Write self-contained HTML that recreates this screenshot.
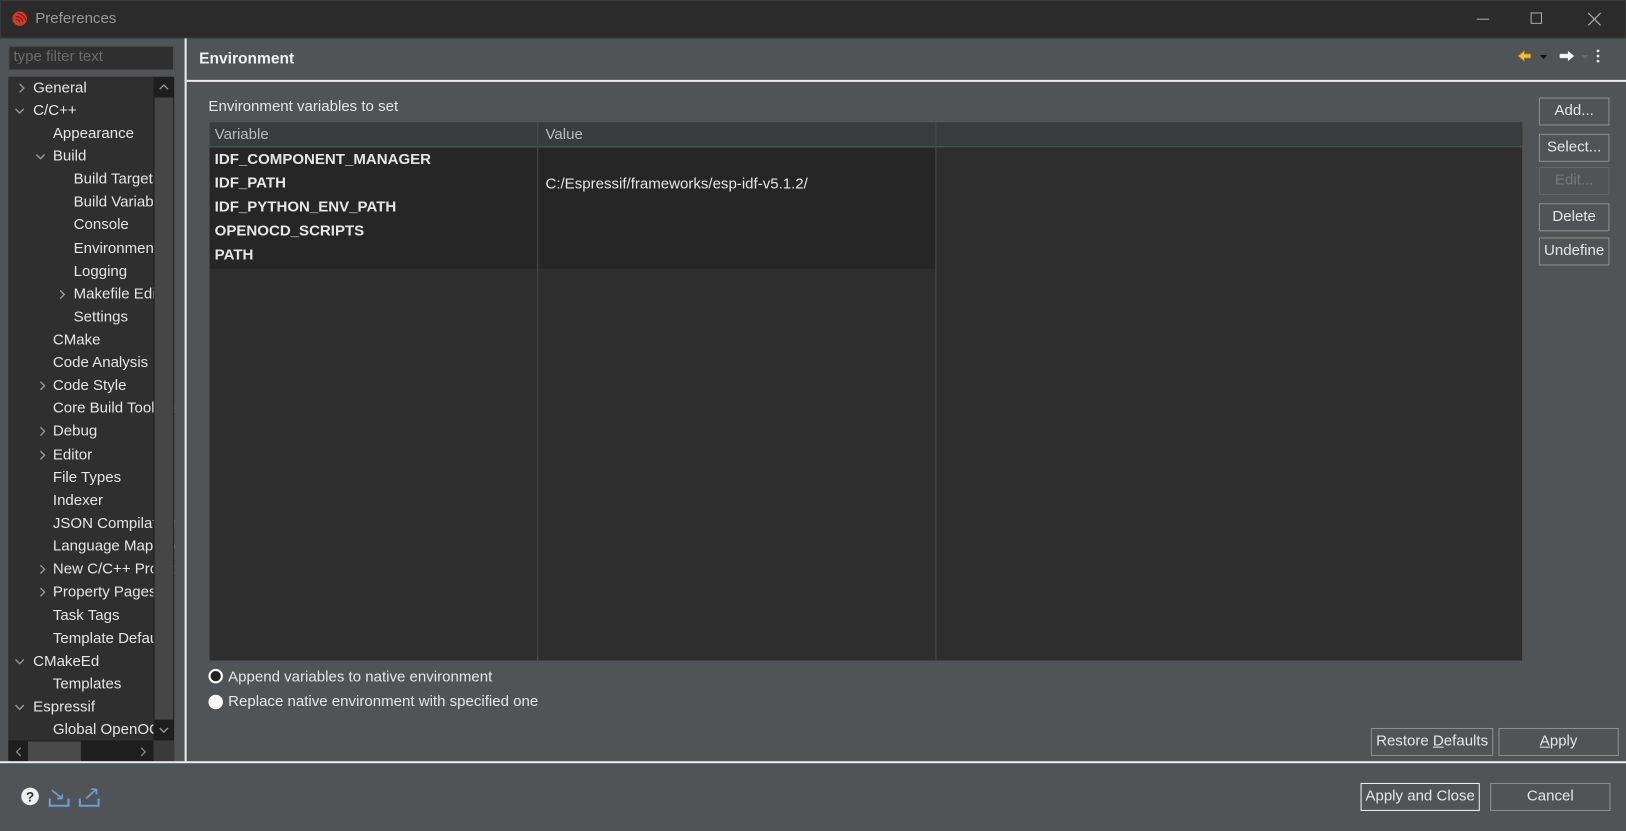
<!DOCTYPE html>
<html><head><meta charset="utf-8"><style>
*{margin:0;padding:0;box-sizing:border-box}
html,body{width:1626px;height:831px;overflow:hidden;background:#505457}
#w{width:1568px;height:802px;transform:scale(1.037);transform-origin:0 0;position:relative;font-family:"Liberation Sans",sans-serif;font-size:14.5px;color:#e6e6e6}
.abs{position:absolute}
.title{left:0;top:0;width:1568px;height:37px;background:#2b2b2b;border:1px solid #3a3a3a}
.tree{left:8px;top:74px;width:160px;height:661px;background:#2f2f2f;overflow:hidden}
.ti{position:absolute;white-space:nowrap;height:22px;line-height:22px}
.chev{position:absolute}
.btn{position:absolute;border:1px solid #8e8e8e;text-align:center;color:#e6e6e6;height:27px;line-height:25px}
.row{position:absolute;left:207px;font-weight:bold;height:23px;line-height:23px}
</style></head><body><div id="w">
<div class="abs title"></div>
<svg class="abs" style="left:11px;top:10px" width="16" height="16"><circle cx="8" cy="8" r="7" fill="#d23a2c"/><path d="M4 6a6 6 0 0 1 7 5M4 9a3 3 0 0 1 4 3M6 3a9 9 0 0 1 8 7" stroke="#8a1c14" stroke-width="1.2" fill="none"/></svg>
<div class="abs" style="left:34px;top:10px;color:#9a9a9a">Preferences</div>
<div class="abs" style="left:1424px;top:18px;width:12px;height:1px;background:#aaa"></div>
<div class="abs" style="left:1476px;top:12px;width:11px;height:11px;border:1px solid #aaa"></div>
<svg class="abs" style="left:1531px;top:12px" width="13" height="13"><path d="M0.5 0.5L12.5 12.5M12.5 0.5L0.5 12.5" stroke="#aaa" stroke-width="1.2"/></svg>

<div class="abs" style="left:8px;top:44px;width:160px;height:24px;background:#2f2f2f;border:1px solid #555"></div>
<div class="abs" style="left:13px;top:47px;color:#6b6b6b">type filter text</div>

<div class="abs tree">
<svg width="0" height="0" style="position:absolute"><defs>
<path id="cr" d="M2 1L6 5L2 9" stroke="#9a9a9a" stroke-width="1.3" fill="none"/>
<path id="cd" d="M1 2L5 6L9 2" stroke="#9a9a9a" stroke-width="1.3" fill="none"/></defs></svg>
<svg class="chev" style="left:9px;top:6px" width="10" height="10"><use href="#cr"/></svg><div class="ti" style="left:24px;top:0">General</div>
<svg class="chev" style="left:6px;top:29px" width="10" height="10"><use href="#cd"/></svg><div class="ti" style="left:24px;top:22px">C/C++</div>
<div class="ti" style="left:43px;top:44px">Appearance</div>
<svg class="chev" style="left:26px;top:73px" width="10" height="10"><use href="#cd"/></svg><div class="ti" style="left:43px;top:66px">Build</div>
<div class="ti" style="left:63px;top:88px">Build Targets</div>
<div class="ti" style="left:63px;top:110px">Build Variables</div>
<div class="ti" style="left:63px;top:132px">Console</div>
<div class="ti" style="left:63px;top:155px">Environment</div>
<div class="ti" style="left:63px;top:177px">Logging</div>
<svg class="chev" style="left:48px;top:205px" width="10" height="10"><use href="#cr"/></svg><div class="ti" style="left:63px;top:199px">Makefile Editor</div>
<div class="ti" style="left:63px;top:221px">Settings</div>
<div class="ti" style="left:43px;top:243px">CMake</div>
<div class="ti" style="left:43px;top:265px">Code Analysis</div>
<svg class="chev" style="left:29px;top:293px" width="10" height="10"><use href="#cr"/></svg><div class="ti" style="left:43px;top:287px">Code Style</div>
<div class="ti" style="left:43px;top:309px">Core Build Toolchains</div>
<svg class="chev" style="left:29px;top:337px" width="10" height="10"><use href="#cr"/></svg><div class="ti" style="left:43px;top:331px">Debug</div>
<svg class="chev" style="left:29px;top:360px" width="10" height="10"><use href="#cr"/></svg><div class="ti" style="left:43px;top:354px">Editor</div>
<div class="ti" style="left:43px;top:376px">File Types</div>
<div class="ti" style="left:43px;top:398px">Indexer</div>
<div class="ti" style="left:43px;top:420px">JSON Compilation</div>
<div class="ti" style="left:43px;top:442px">Language Mappings</div>
<svg class="chev" style="left:29px;top:470px" width="10" height="10"><use href="#cr"/></svg><div class="ti" style="left:43px;top:464px">New C/C++ Project</div>
<svg class="chev" style="left:29px;top:492px" width="10" height="10"><use href="#cr"/></svg><div class="ti" style="left:43px;top:486px">Property Pages</div>
<div class="ti" style="left:43px;top:509px">Task Tags</div>
<div class="ti" style="left:43px;top:531px">Template Default</div>
<svg class="chev" style="left:6px;top:560px" width="10" height="10"><use href="#cd"/></svg><div class="ti" style="left:24px;top:553px">CMakeEd</div>
<div class="ti" style="left:43px;top:575px">Templates</div>
<svg class="chev" style="left:6px;top:604px" width="10" height="10"><use href="#cd"/></svg><div class="ti" style="left:24px;top:597px">Espressif</div>
<div class="ti" style="left:43px;top:619px">Global OpenOCD</div>
<div class="abs" style="left:140px;top:0;width:20px;height:640px;background:#1e1e1e"></div>
<div class="abs" style="left:141px;top:20px;width:18px;height:600px;background:#464646"></div>
<svg class="abs" style="left:145px;top:5px" width="10" height="10"><path d="M1 7L5 3L9 7" stroke="#999" stroke-width="1.3" fill="none"/></svg>
<svg class="abs" style="left:145px;top:625px" width="10" height="10"><path d="M1 3L5 7L9 3" stroke="#999" stroke-width="1.3" fill="none"/></svg>
<div class="abs" style="left:0;top:640px;width:140px;height:21px;background:#1e1e1e"></div>
<div class="abs" style="left:19px;top:641px;width:51px;height:20px;background:#4a4a4a"></div>
<svg class="abs" style="left:5px;top:646px" width="10" height="10"><path d="M7 1L3 5L7 9" stroke="#888" stroke-width="1.3" fill="none"/></svg>
<svg class="abs" style="left:125px;top:646px" width="10" height="10"><path d="M3 1L7 5L3 9" stroke="#888" stroke-width="1.3" fill="none"/></svg>
<div class="abs" style="left:140px;top:640px;width:20px;height:21px;background:#3a3a3a"></div>
</div>

<div class="abs" style="left:178px;top:37px;width:2px;height:698px;background:#e8e8e8"></div>
<div class="abs" style="left:192px;top:48px;font-weight:bold;font-size:15px;color:#f0f0f0">Environment</div>
<div class="abs" style="left:180px;top:77px;width:1388px;height:2px;background:#e8e8e8"></div>
<svg class="abs" style="left:1462px;top:46px" width="90" height="16">
<path d="M2 8L8 3V6H14V10H8V13Z" fill="#f0c040" stroke="#b07a10" stroke-width="0.8"/>
<path d="M23 7H30L26.5 11Z" fill="#111"/>
<path d="M56 8L50 3V6H42V10H50V13Z" fill="#f4f4f4"/>
<path d="M63 7H70L66.5 11Z" fill="#6a6a6a"/>
<circle cx="79" cy="3" r="1.3" fill="#eee"/><circle cx="79" cy="8" r="1.3" fill="#eee"/><circle cx="79" cy="13" r="1.3" fill="#eee"/>
</svg>

<div class="abs" style="left:201px;top:95px">Environment variables to set</div>
<div class="abs" style="left:201px;top:117px;width:1268px;height:521px;background:#2e2e2e;border:1px solid #5a5a5a"></div>
<div class="abs" style="left:202px;top:118px;width:1266px;height:24px;background:#383c3d;border-bottom:1px solid #555"></div>
<div class="abs" style="left:202px;top:143px;width:700px;height:116px;background:#262626"></div>
<div class="abs" style="left:518px;top:118px;width:1px;height:519px;background:#4a4a4a"></div>
<div class="abs" style="left:902px;top:118px;width:1px;height:519px;background:#4a4a4a"></div>
<div class="abs" style="left:207px;top:122px;color:#bbb">Variable</div>
<div class="abs" style="left:526px;top:122px;color:#bbb">Value</div>
<div class="row" style="top:143px">IDF_COMPONENT_MANAGER</div>
<div class="row" style="top:166px">IDF_PATH</div>
<div class="row" style="top:189px">IDF_PYTHON_ENV_PATH</div>
<div class="row" style="top:212px">OPENOCD_SCRIPTS</div>
<div class="row" style="top:235px">PATH</div>
<div class="abs" style="left:526px;top:170px">C:/Espressif/frameworks/esp-idf-v5.1.2/</div>

<div class="btn" style="left:1484px;top:94px;width:68px">Add...</div>
<div class="btn" style="left:1484px;top:129px;width:68px">Select...</div>
<div class="btn" style="left:1484px;top:161px;width:68px;color:#777;border-color:#666">Edit...</div>
<div class="btn" style="left:1484px;top:196px;width:68px">Delete</div>
<div class="btn" style="left:1484px;top:229px;width:68px">Undefine</div>

<div class="abs" style="left:201px;top:645px;width:14px;height:14px;border-radius:50%;border:2px solid #fff;background:#222"></div>
<div class="abs" style="left:220px;top:645px">Append variables to native environment</div>
<div class="abs" style="left:201px;top:670px;width:14px;height:14px;border-radius:50%;background:#fff"></div>
<div class="abs" style="left:220px;top:669px">Replace native environment with specified one</div>

<div class="btn" style="left:1322px;top:702px;width:118px">Restore <u>D</u>efaults</div>
<div class="btn" style="left:1445px;top:702px;width:116px"><u>A</u>pply</div>
<div class="abs" style="left:0;top:734px;width:1568px;height:2px;background:#e8e8e8"></div>

<svg class="abs" style="left:19px;top:758px" width="80" height="22">
<circle cx="10" cy="10" r="8.5" fill="#f0f0f0"/><text x="10" y="15" font-size="13" font-weight="bold" text-anchor="middle" fill="#333" font-family="Liberation Sans">?</text>
<path d="M29 12V19H47V12" stroke="#6aa0d8" stroke-width="2" fill="none"/><path d="M31 4L41 12M41 12H36M41 12V8" stroke="#6aa0d8" stroke-width="1.6" fill="none"/>
<path d="M58 12V19H76V12" stroke="#6aa0d8" stroke-width="2" fill="none"/><path d="M64 12L74 3M74 3H69M74 3V8" stroke="#6aa0d8" stroke-width="1.6" fill="none"/>
</svg>
<div class="btn" style="left:1312px;top:755px;width:115px;border-color:#f0f0f0">Apply and Close</div>
<div class="btn" style="left:1437px;top:755px;width:116px">Cancel</div>
</div></body></html>
